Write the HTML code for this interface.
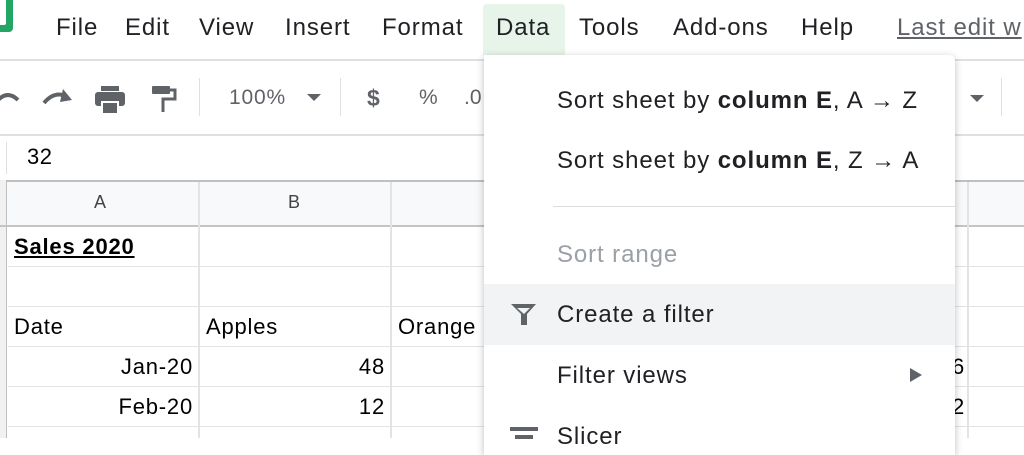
<!DOCTYPE html>
<html><head><meta charset="utf-8"><style>
*{margin:0;padding:0;box-sizing:border-box}
body{width:1024px;height:438px;overflow:hidden;background:#fff;font-family:"Liberation Sans",Arial,sans-serif;position:relative;color:#202124}
.a{position:absolute;white-space:nowrap}
.m{font-size:24px;top:14px;color:#202124;letter-spacing:0.9px}
.hl{background:#e0e0e0;position:absolute}
.gl{background:#e2e3e3;position:absolute}
.cell{position:absolute;font-size:22px;color:#000;letter-spacing:0.8px;white-space:nowrap}
.mi{position:absolute;left:557px;font-size:24px;color:#202124;letter-spacing:0.9px;white-space:nowrap}
</style></head><body>
<div class="a" style="left:0;top:0;width:13px;height:32px;background:#23a566;border-radius:0 0 4px 0"></div>
<div class="a" style="left:0;top:0;width:6px;height:25px;background:#fff;border-radius:0 0 2px 0"></div>
<div class="a" style="left:483px;top:4px;width:82px;height:52px;background:#e6f4ea;border-radius:4px 4px 0 0"></div>
<div class="a m" style="left:56px">File</div>
<div class="a m" style="left:125px">Edit</div>
<div class="a m" style="left:199px">View</div>
<div class="a m" style="left:285px">Insert</div>
<div class="a m" style="left:382px">Format</div>
<div class="a m" style="left:496px">Data</div>
<div class="a m" style="left:579px">Tools</div>
<div class="a m" style="left:673px">Add-ons</div>
<div class="a m" style="left:801px">Help</div>
<div class="a m" style="left:897px;color:#5f6368;text-decoration:underline">Last edit w</div>
<div class="hl" style="left:0;top:59px;width:1024px;height:2px"></div>
<div class="hl" style="left:0;top:134px;width:1024px;height:2px"></div>
<svg class="a" style="left:0;top:80px" width="200" height="40">
<path d="M-2 20 Q8 10 18 20" stroke="#5f6368" stroke-width="4" fill="none"/>
<path d="M44 23 Q54 11 66 16" stroke="#5f6368" stroke-width="4" fill="none"/>
<path d="M63 9 L72 20 L60 22 Z" fill="#5f6368"/>
<rect x="101" y="6" width="18" height="5" fill="#5f6368"/>
<rect x="95" y="12" width="30" height="14" rx="3" fill="#5f6368"/>
<rect x="101" y="21" width="18" height="10" fill="#fff"/>
<rect x="103" y="23" width="14" height="10" fill="#5f6368"/>
<rect x="152" y="6" width="18" height="8" rx="1" fill="#5f6368"/>
<path d="M170 10 H175 V19 H163 V32" stroke="#5f6368" stroke-width="3" fill="none"/>
</svg>
<div class="hl" style="left:199px;top:78px;width:1px;height:38px"></div>
<div class="a" style="left:229px;top:86px;font-size:21px;color:#5f6368;letter-spacing:0.8px">100%</div>
<svg class="a" style="left:307px;top:94px" width="14" height="8"><path d="M0 0 H14 L7 7Z" fill="#5f6368"/></svg>
<div class="hl" style="left:340px;top:78px;width:1px;height:38px"></div>
<div class="a" style="left:367px;top:85px;font-size:23px;color:#5f6368;font-weight:bold">$</div>
<div class="a" style="left:419px;top:86px;font-size:21px;color:#5f6368">%</div>
<div class="a" style="left:464px;top:86px;font-size:21px;color:#5f6368">.0</div>
<svg class="a" style="left:970px;top:95px" width="14" height="8"><path d="M0 0 H14 L7 7Z" fill="#5f6368"/></svg>
<div class="hl" style="left:1001px;top:78px;width:1px;height:38px"></div>
<div class="hl" style="left:6px;top:142px;width:1px;height:32px"></div>
<div class="a" style="left:27px;top:144px;font-size:22px;color:#000;letter-spacing:0.5px">32</div>
<div class="a" style="left:0;top:180px;width:1024px;height:46px;background:#f8f9fa;border-top:2px solid #c0c0c0"></div>
<div class="a" style="left:0;top:180px;width:7px;height:258px;background:#f1f1f1;border-right:1px solid #c0c0c0"></div>
<div class="hl" style="left:0;top:225px;width:1024px;height:2px;background:#c4c4c4"></div>
<div class="a" style="left:94px;top:192px;font-size:18px;color:#444">A</div>
<div class="a" style="left:288px;top:192px;font-size:18px;color:#444">B</div>
<div class="gl" style="left:198px;top:182px;width:2px;height:256px"></div>
<div class="gl" style="left:390px;top:182px;width:2px;height:256px"></div>
<div class="gl" style="left:967px;top:182px;width:2px;height:256px"></div>
<div class="gl" style="left:8px;top:266px;width:1016px;height:1px"></div>
<div class="gl" style="left:8px;top:306px;width:1016px;height:1px"></div>
<div class="gl" style="left:8px;top:346px;width:1016px;height:1px"></div>
<div class="gl" style="left:8px;top:386px;width:1016px;height:1px"></div>
<div class="gl" style="left:8px;top:426px;width:1016px;height:1px"></div>
<div class="cell" style="left:14px;top:234px;font-weight:bold;text-decoration:underline;font-size:22px">Sales 2020</div>
<div class="cell" style="left:14px;top:314px">Date</div>
<div class="cell" style="left:206px;top:314px">Apples</div>
<div class="cell" style="left:398px;top:314px">Orange</div>
<div class="cell" style="right:831px;top:354px">Jan-20</div>
<div class="cell" style="right:831px;top:394px">Feb-20</div>
<div class="cell" style="right:639px;top:354px">48</div>
<div class="cell" style="right:639px;top:394px">12</div>
<div class="cell" style="left:952px;top:354px">6</div>
<div class="cell" style="left:952px;top:394px">2</div>
<div class="a" style="left:484px;top:55px;width:471px;height:400px;background:#fff;border-radius:0 6px 0 0;box-shadow:0 2px 8px rgba(0,0,0,.25)"></div>
<div class="mi" style="top:87px">Sort sheet by <b>column E</b>, A → Z</div>
<div class="mi" style="top:147px">Sort sheet by <b>column E</b>, Z → A</div>
<div class="a" style="left:553px;top:206px;width:402px;height:1px;background:#dadce0"></div>
<div class="mi" style="top:241px;color:#9aa0a6">Sort range</div>
<div class="a" style="left:484px;top:284px;width:471px;height:61px;background:#f1f3f4"></div>
<svg class="a" style="left:510px;top:302px" width="28" height="24"><path d="M1 2 H26 L17 12 V23 H11 V12 Z" fill="#5f6368"/><path d="M7 6 H20 L14 12 Z" fill="#f1f3f4"/></svg>
<div class="mi" style="top:301px">Create a filter</div>
<div class="mi" style="top:362px">Filter views</div>
<svg class="a" style="left:909px;top:368px" width="14" height="14"><path d="M1 0 L13 7 L1 14Z" fill="#5f6368"/></svg>
<div class="a" style="left:510px;top:427px;width:28px;height:4px;background:#5f6368"></div>
<div class="a" style="left:515px;top:435px;width:18px;height:4px;background:#5f6368"></div>
<div class="mi" style="top:423px">Slicer</div>
</body></html>
